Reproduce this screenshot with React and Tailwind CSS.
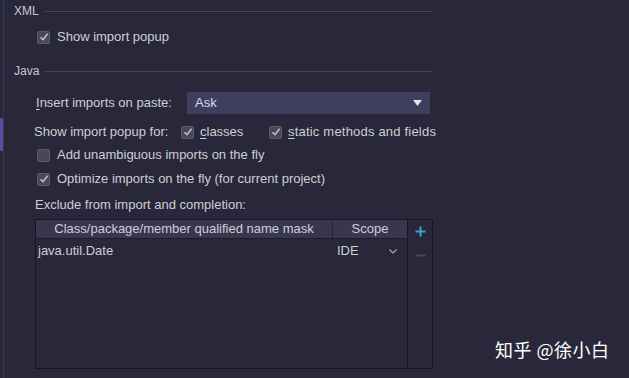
import React from "react";

const font = { fontFamily: '"Liberation Sans", Arial, sans-serif' };

const Check = ({ checked }) => (
  <span className="w-[13px] h-[13px] shrink-0 rounded-[2px] border border-[#5c5a68] bg-[#4a4856] flex items-center justify-center">
    {checked && (
      <svg width="10" height="10" viewBox="0 0 10 10">
        <path d="M1.5 5.2 L4 7.8 L8.6 1.8" fill="none" stroke="#c9c8d0" strokeWidth="1.4" />
      </svg>
    )}
  </span>
);

const Title = ({ text }) => (
  <div className="flex items-center h-[16px] pl-[10px] pr-[197px]">
    <span className="text-[12px] text-[#c8c7d0] pr-[6px]">{text}</span>
    <div className="flex-1 h-px bg-[#4a4858]" />
  </div>
);

const CheckRow = ({ checked, children, className = "" }) => (
  <div className={"flex items-center h-[20px] pl-[33px] gap-[7px] " + className}>
    <Check checked={checked} />
    <span>{children}</span>
  </div>
);

export default function App() {
  return (
    <div
      className="w-[629px] h-[378px] bg-[#29283a] flex text-[13px] text-[#cfced6] relative overflow-hidden"
      style={font}
    >
      <div className="w-[3px] flex flex-col">
        <div className="h-[118px]" />
        <div className="h-[33px] bg-[#5b4c9c]" />
      </div>
      <div className="w-px bg-[#3a3848]" />
      <div className="flex-1 flex flex-col pt-[3px]">
        <Title text="XML" />
        <CheckRow checked className="mt-[8px]">Show import popup</CheckRow>
        <div className="mt-[16px]">
          <Title text="Java" />
        </div>
        <div className="flex items-center mt-[13px] pl-[32px]">
          <span className="w-[151px]">
            <span className="underline underline-offset-2">I</span>nsert imports on paste:
          </span>
          <div className="w-[243px] h-[22px] bg-[#403e5f] flex items-center justify-between px-[8px] text-[#dcdbe4]">
            <span>Ask</span>
            <svg width="9" height="6" viewBox="0 0 9 6">
              <path d="M0 0 H9 L4.5 6 Z" fill="#e4e3ea" />
            </svg>
          </div>
        </div>
        <div className="flex items-center h-[20px] mt-[8px] pl-[30px]">
          <span className="w-[147px]">Show import popup for:</span>
          <Check checked />
          <span className="ml-[6px] w-[69px]">
            <span className="underline underline-offset-2">c</span>lasses
          </span>
          <Check checked />
          <span className="ml-[6px] tracking-[0.2px]">
            <span className="underline underline-offset-2">s</span>tatic methods and fields
          </span>
        </div>
        <CheckRow className="mt-[3px]">Add unambiguous imports on the fly</CheckRow>
        <CheckRow checked className="mt-[4px]">Optimize imports on the fly (for current project)</CheckRow>
        <div className="h-[20px] flex items-center mt-[6px] pl-[31px]">Exclude from import and completion:</div>
        <div className="mt-[4px] ml-[31px] w-[398px] h-[150px] border border-[#17151f] flex">
          <div className="flex-1 flex flex-col border-r border-[#17151f]">
            <div className="h-[19px] flex bg-[#393750] border-b border-[#1e1c2a]">
              <div className="flex-1 flex items-center justify-center border-r border-[#25233a]">
                Class/package/member qualified name mask
              </div>
              <div className="w-[74px] flex items-center justify-center">Scope</div>
            </div>
            <div className="h-[24px] flex items-center">
              <span className="flex-1 pl-[2px]">java.util.Date</span>
              <span className="w-[74px] flex items-center justify-between pl-[4px] pr-[10px]">
                IDE
                <svg width="8" height="5" viewBox="0 0 8 5">
                  <path d="M0.5 0.5 L4 4 L7.5 0.5" fill="none" stroke="#a9a8b4" strokeWidth="1.2" />
                </svg>
              </span>
            </div>
          </div>
          <div className="w-[24px] flex flex-col items-center pt-[6px] gap-[13px]">
            <svg width="11" height="11" viewBox="0 0 11 11">
              <path d="M5.5 0.5 V10.5 M0.5 5.5 H10.5" stroke="#3aa6c4" strokeWidth="2" />
            </svg>
            <svg width="11" height="11" viewBox="0 0 11 11">
              <path d="M0.5 5.5 H10.5" stroke="#4a4858" strokeWidth="2" />
            </svg>
          </div>
        </div>
      </div>
      <div
        className="absolute left-[495px] top-[336px] text-[18px] text-white tracking-[0.5px]"
        style={{ fontFamily: '"Noto Sans CJK SC", sans-serif' }}
      >
        知乎 @徐小白
      </div>
    </div>
  );
}
